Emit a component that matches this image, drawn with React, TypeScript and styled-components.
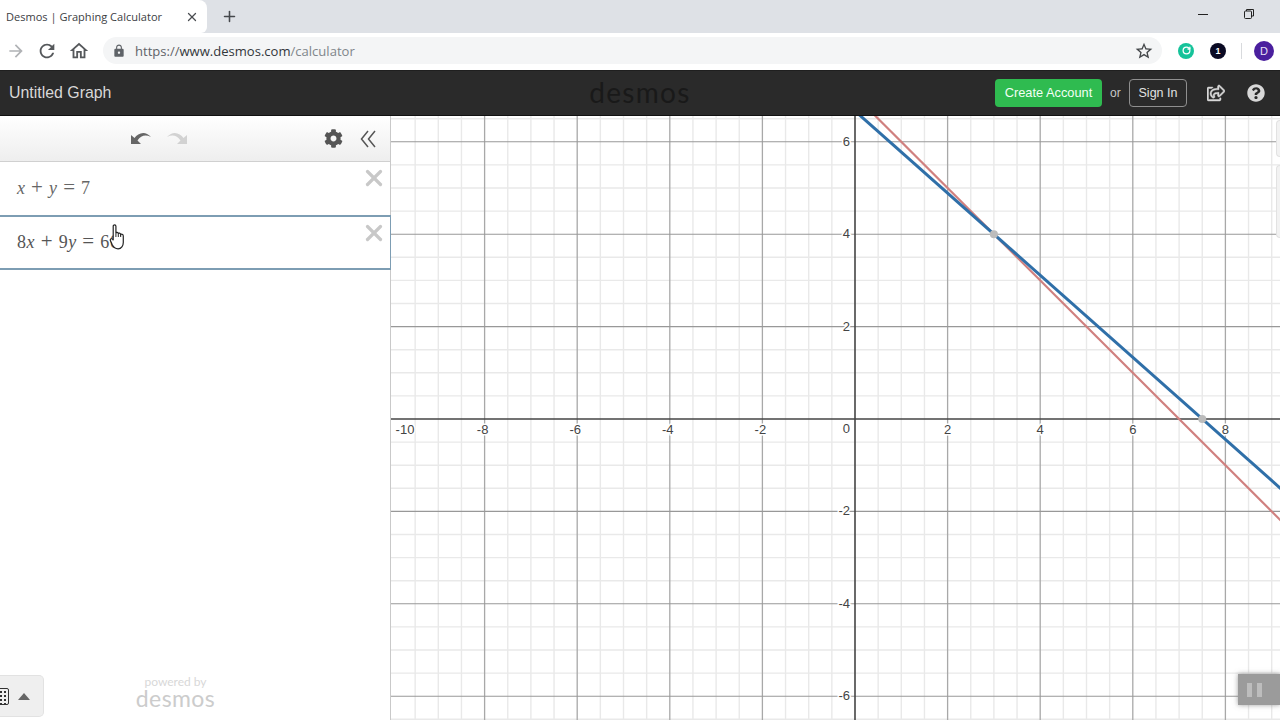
import { createGlobalStyle, styled } from "styled-components";
import { FaCog, FaQuestionCircle, FaRegShareSquare } from "react-icons/fa";
import {
  MdArrowForward,
  MdLock,
  MdOutlineHome,
  MdRefresh,
  MdStarBorder,
} from "react-icons/md";
import { LuPlus, LuRotateCw, LuX } from "react-icons/lu";

const UNIT_X = 46.3;
const UNIT_Y = 46.2;
const ORIGIN_X = 464;
const ORIGIN_Y = 303;
const WIDTH = 889;
const HEIGHT = 604;

const sx = (x: number) => ORIGIN_X + x * UNIT_X;
const sy = (y: number) => ORIGIN_Y - y * UNIT_Y;

const range = (from: number, to: number, step: number) => {
  const out: number[] = [];
  for (let v = from; v <= to; v += step) out.push(v);
  return out;
};

function Graph() {
  const minorX = range(-10, 10, 0.5).filter((v) => v % 2 !== 0);
  const minorY = range(-7, 7, 0.5).filter((v) => v % 2 !== 0);
  const majorX = range(-8, 10, 2).filter((v) => v !== 0);
  const majorY = range(-6, 6, 2).filter((v) => v !== 0);
  const labelsX = range(-10, 8, 2).filter((v) => v !== 0);

  return (
    <GraphSvg viewBox={`0 0 ${WIDTH} ${HEIGHT}`}>
      {minorX.map((v) => (
        <line key={v} x1={sx(v)} x2={sx(v)} y1={0} y2={HEIGHT} stroke="#e9e9e9" strokeWidth={1.4} />
      ))}
      {minorY.map((v) => (
        <line key={v} x1={0} x2={WIDTH} y1={sy(v)} y2={sy(v)} stroke="#e9e9e9" strokeWidth={1.4} />
      ))}
      {majorX.map((v) => (
        <line key={v} x1={sx(v)} x2={sx(v)} y1={0} y2={HEIGHT} stroke="#a8a8a8" strokeWidth={1.3} />
      ))}
      {majorY.map((v) => (
        <line key={v} x1={0} x2={WIDTH} y1={sy(v)} y2={sy(v)} stroke="#989898" strokeWidth={1.1} />
      ))}
      <line x1={0} x2={WIDTH} y1={ORIGIN_Y} y2={ORIGIN_Y} stroke="#444" strokeWidth={1.6} />
      <line x1={ORIGIN_X} x2={ORIGIN_X} y1={0} y2={HEIGHT} stroke="#444" strokeWidth={1.6} />

      <line x1={sx(0)} y1={sy(7)} x2={sx(10)} y2={sy(-3)} stroke="#d0807f" strokeWidth={2.2} />
      <line x1={sx(-1)} y1={sy(68 / 9)} x2={sx(10)} y2={sy(-20 / 9)} stroke="#2f6fa8" strokeWidth={3} />
      <circle cx={sx(3)} cy={sy(4)} r={4} fill="#bcbcbc" />
      <circle cx={sx(7.5)} cy={sy(0)} r={4} fill="#bcbcbc" />

      {labelsX.map((v) => (
        <TickLabel key={v} x={Math.max(sx(v) - (v < 0 ? 2 : 0), 14)} y={ORIGIN_Y + 15} textAnchor="middle">
          {v}
        </TickLabel>
      ))}
      {majorY.map((v) => (
        <TickLabel key={v} x={ORIGIN_X - 5} y={sy(v) + 4} textAnchor="end">
          {v}
        </TickLabel>
      ))}
      <TickLabel x={ORIGIN_X - 5} y={ORIGIN_Y + 14} textAnchor="end">
        0
      </TickLabel>
    </GraphSvg>
  );
}

function UndoArrow({ color }: { color: string }) {
  return (
    <svg width="22" height="16" viewBox="0 0 22 16">
      <path d="M1 14V5l3.5 3C8 3 15 0 21 7 16 4.5 11 5 7.5 10.5L11 14Z" fill={color} />
    </svg>
  );
}

function RemoveCross() {
  return <LuX size={26} strokeWidth={3} />;
}

export default function App() {
  return (
    <>
      <GlobalStyle />
      <Page>
        <TabStrip>
          <Tab>
            <TabTitle>Desmos | Graphing Calculator</TabTitle>
            <LuX size={14} strokeWidth={2.2} color="#4a4d51" />
          </Tab>
          <NewTab>
            <LuPlus size={17} strokeWidth={2.2} />
          </NewTab>
          <WindowControls>
            <svg width="12" height="12" viewBox="0 0 12 12">
              <path d="M1 6.5h10" stroke="#222" strokeWidth="1" />
            </svg>
            <svg width="12" height="12" viewBox="0 0 12 12" fill="none" stroke="#222">
              <rect x="1.5" y="3" width="7" height="7.5" rx="1" />
              <path d="M3.5 3V1.5h7V8H8.5" />
            </svg>
          </WindowControls>
        </TabStrip>

        <Toolbar>
          <NavIcons>
            <MdArrowForward size={20} color="#b0b2b5" />
            <MdRefresh size={22} color="#55585b" />
            <MdOutlineHome size={22} color="#55585b" />
          </NavIcons>
          <Omnibox>
            <MdLock size={14} color="#5f6368" />
            <Url>
              <UrlPart $tone="#5f6368">https://</UrlPart>
              <UrlPart $tone="#33373b">www.desmos.com</UrlPart>
              <UrlPart $tone="#80868b">/calculator</UrlPart>
            </Url>
            <StarSlot>
              <MdStarBorder size={20} color="#44474a" />
            </StarSlot>
          </Omnibox>
          <Extensions>
            <GrammarlyBadge>
              <LuRotateCw size={9} strokeWidth={3.4} color="#fff" />
            </GrammarlyBadge>
            <PasswordBadge>1</PasswordBadge>
            <ToolbarRule />
            <Avatar>D</Avatar>
          </Extensions>
        </Toolbar>

        <Header>
          <GraphTitle>Untitled Graph</GraphTitle>
          <HeaderLogo>desmos</HeaderLogo>
          <HeaderActions>
            <CreateButton>Create Account</CreateButton>
            <OrLabel>or</OrLabel>
            <SignInButton>Sign In</SignInButton>
            <ShareIcon>
              <FaRegShareSquare size={18} />
            </ShareIcon>
            <HelpIcon>
              <FaQuestionCircle size={18} />
            </HelpIcon>
          </HeaderActions>
        </Header>

        <Main>
          <Sidebar>
            <ListToolbar>
              <HistoryButtons>
                <UndoArrow color="#666" />
                <Mirrored>
                  <UndoArrow color="#d2d2d2" />
                </Mirrored>
              </HistoryButtons>
              <ListTools>
                <FaCog size={19} color="#555" />
                <svg width="16" height="18" viewBox="0 0 16 18" fill="none" stroke="#555" strokeWidth="1.5">
                  <path d="M8 1 1.5 9 8 17M15 1 8.5 9 15 17" />
                </svg>
              </ListTools>
            </ListToolbar>

            <Expression>
              <MathText $tone="#666">
                <i>x</i>
                <MathOp>+</MathOp>
                <i>y</i>
                <MathOp>=</MathOp>7
              </MathText>
              <RemoveIcon>
                <RemoveCross />
              </RemoveIcon>
            </Expression>
            <Expression $focused>
              <MathText $tone="#555">
                8<i>x</i>
                <MathOp>+</MathOp>9<i>y</i>
                <MathOp>=</MathOp>60
              </MathText>
              <RemoveIcon>
                <RemoveCross />
              </RemoveIcon>
              <HandCursor width="16" height="26" viewBox="0 0 14 24">
                <path
                  d="M3.5 12V2C3.5.5 6 .5 6 2v6.5C6.3 7.5 8 7.5 8.2 9c.3-1 2-.8 2.2.8.4-.8 2.4-.5 2.4 1.2v6c0 3-1.8 6-4.8 6-3 0-4.5-2-5.5-4L.8 15c-.3-1.5 1.7-2.2 2.7 0Z"
                  fill="#fff"
                  stroke="#222"
                  strokeWidth="1.1"
                />
                <path d="M6 8.5V12M8.2 9v3M10.4 9.8V12" fill="none" stroke="#222" strokeWidth=".9" />
              </HandCursor>
            </Expression>

            <SidebarFooter>
              <KeypadToggle>
                <KeypadGlyph />
                <KeypadCaret />
              </KeypadToggle>
              <PoweredBy>
                <PoweredLabel>powered by</PoweredLabel>
                <PoweredLogo>desmos</PoweredLogo>
              </PoweredBy>
            </SidebarFooter>
          </Sidebar>

          <GraphPane>
            <Graph />
            <EdgeControls>
              <EdgeTab $height={37} />
              <EdgeTab $height={73} />
            </EdgeControls>
            <PauseOverlay>
              <PauseBar />
              <PauseBar />
            </PauseOverlay>
          </GraphPane>
        </Main>
      </Page>
    </>
  );
}

const GlobalStyle = createGlobalStyle`
  html, body {
    margin: 0;
    padding: 0;
    background: #fff;
    overflow: hidden;
  }
`;

const Page = styled.div`
  width: 1280px;
  height: 720px;
  display: flex;
  flex-direction: column;
  overflow: hidden;
  font-family: "Liberation Sans", Arial, sans-serif;
`;

const TabStrip = styled.div`
  height: 33px;
  flex: none;
  display: flex;
  align-items: center;
  background: #dee1e6;
`;

const Tab = styled.div`
  width: 207px;
  height: 33px;
  box-sizing: border-box;
  padding: 0 8px 0 6px;
  display: flex;
  align-items: center;
  justify-content: space-between;
  background: #fff;
  border-top-right-radius: 8px;
  border-bottom-right-radius: 6px;
`;

const TabTitle = styled.span`
  font-family: "Open Sans", sans-serif;
  font-size: 11.05px;
  color: #3c4043;
`;

const NewTab = styled.div`
  margin-left: 14px;
  display: flex;
  color: #45484c;
`;

const WindowControls = styled.div`
  margin-left: auto;
  width: 58px;
  margin-right: 25px;
  padding-bottom: 5px;
  display: flex;
  justify-content: space-between;
`;

const Toolbar = styled.div`
  height: 37px;
  flex: none;
  box-sizing: border-box;
  padding: 3px 0 5px 6px;
  display: flex;
  align-items: center;
  background: #fff;
`;

const NavIcons = styled.div`
  width: 97px;
  flex: none;
  display: flex;
  align-items: center;
  gap: 10px;
`;

const Omnibox = styled.div`
  width: 1059px;
  height: 27px;
  flex: none;
  box-sizing: border-box;
  padding: 0 8px 0 9px;
  display: flex;
  align-items: center;
  gap: 9px;
  background: #f4f5f6;
  border-radius: 14px;
`;

const Url = styled.span`
  font-family: "Open Sans", sans-serif;
  font-size: 13.05px;
`;

const UrlPart = styled.span<{ $tone: string }>`
  color: ${(p) => p.$tone};
`;

const StarSlot = styled.span`
  margin-left: auto;
  display: flex;
`;

const Extensions = styled.div`
  flex: 1;
  padding-left: 16px;
  display: flex;
  align-items: center;
`;

const GrammarlyBadge = styled.span`
  width: 16px;
  height: 16px;
  display: flex;
  align-items: center;
  justify-content: center;
  background: #15c39a;
  border-radius: 50%;
`;

const PasswordBadge = styled.span`
  width: 16px;
  height: 16px;
  margin-left: 16px;
  display: flex;
  align-items: center;
  justify-content: center;
  background: #0a0a23;
  border-radius: 50%;
  color: #fff;
  font-size: 9px;
  font-weight: 700;
`;

const ToolbarRule = styled.span`
  width: 1px;
  height: 16px;
  margin: 0 12px 0 15px;
  background: #d8dadd;
`;

const Avatar = styled.span`
  width: 20px;
  height: 20px;
  display: flex;
  align-items: center;
  justify-content: center;
  background: #4a1f9e;
  border-radius: 50%;
  color: #e8e0f5;
  font-size: 11px;
`;

const Header = styled.header`
  height: 46px;
  flex: none;
  box-sizing: border-box;
  padding: 0 15px;
  display: grid;
  grid-template-columns: 1fr auto 1fr;
  align-items: center;
  background: #2a2a2a;
  border-top: 1px solid #1f1f1f;
  border-bottom: 1px solid #111;
`;

const GraphTitle = styled.div`
  margin-left: -6px;
  font-size: 15.9px;
  color: #d8d8d8;
`;

const HeaderLogo = styled.div`
  margin-top: -3px;
  font-family: "Lato", sans-serif;
  font-size: 28px;
  letter-spacing: 1.3px;
  color: #191919;
`;

const HeaderActions = styled.div`
  display: flex;
  align-items: center;
  justify-content: flex-end;
`;

const CreateButton = styled.div`
  height: 28px;
  width: 107px;
  box-sizing: border-box;
  padding-bottom: 2px;
  display: flex;
  align-items: center;
  justify-content: center;
  background: #2fbb50;
  border-radius: 4px;
  color: #f2fff5;
  font-size: 12.8px;
`;

const OrLabel = styled.span`
  width: 11px;
  margin: 0 8px;
  color: #c8c8c8;
  font-size: 12px;
`;

const SignInButton = styled.div`
  height: 28px;
  width: 58px;
  box-sizing: border-box;
  display: flex;
  align-items: center;
  justify-content: center;
  border: 1px solid #8f8f8f;
  border-radius: 4px;
  color: #e2e2e2;
  font-size: 12.5px;
`;

const ShareIcon = styled.span`
  margin-left: 20px;
  display: flex;
  color: #d8d8d8;

  svg {
    stroke: currentColor;
    stroke-width: 14px;
  }
`;

const HelpIcon = styled.span`
  margin-left: 22px;
  display: flex;
  color: #d8d8d8;
`;

const Main = styled.main`
  flex: 1;
  min-height: 0;
  display: flex;
`;

const Sidebar = styled.aside`
  width: 391px;
  flex: none;
  box-sizing: border-box;
  display: flex;
  flex-direction: column;
  background: #fff;
  border-right: 1px solid #c9c9c9;
`;

const ListToolbar = styled.div`
  height: 46px;
  flex: none;
  box-sizing: border-box;
  padding: 0 14px 0 130px;
  display: flex;
  align-items: center;
  justify-content: space-between;
  background: linear-gradient(#ffffff, #eeeeee);
  border-bottom: 1px solid #d0d0d0;
`;

const HistoryButtons = styled.div`
  margin-top: -2px;
  display: flex;
  gap: 14px;
`;

const Mirrored = styled.span`
  display: flex;
  transform: scaleX(-1);
`;

const ListTools = styled.div`
  display: flex;
  align-items: center;
  gap: 17px;
`;

const Expression = styled.div<{ $focused?: boolean }>`
  position: relative;
  height: ${(p) => (p.$focused ? "55px" : "53px")};
  flex: none;
  box-sizing: border-box;
  padding: 3px 3px 3px 17px;
  display: flex;
  justify-content: space-between;
  background: #fff;
  border: 0 solid #7d9db3;
  border-width: ${(p) => (p.$focused ? "2px 0 2px 0" : "0")};
  box-shadow: ${(p) => (p.$focused ? "1px 0 0 #7d9db3" : "none")};
`;

const MathText = styled.div<{ $tone: string }>`
  align-self: center;
  font-family: "Liberation Serif", "Times New Roman", serif;
  font-size: 18px;
  letter-spacing: 0.6px;
  white-space: pre;
  color: ${(p) => p.$tone};
`;

const MathOp = styled.span`
  margin: 0 5.5px;
  font-size: 21px;
  line-height: 18px;
`;

const RemoveIcon = styled.span`
  display: flex;
  height: 26px;
  color: #c8c8c8;
`;

const HandCursor = styled.svg`
  position: absolute;
  left: 109px;
  top: 7px;
`;

const SidebarFooter = styled.div`
  margin-top: auto;
  padding-bottom: 3px;
  display: flex;
  align-items: flex-end;
`;

const KeypadToggle = styled.div`
  width: 44px;
  height: 42px;
  box-sizing: border-box;
  padding-right: 13px;
  display: flex;
  align-items: center;
  justify-content: space-between;
  background: #efefef;
  border: 1px solid #e2e2e2;
  border-left: 0;
  border-radius: 0 5px 5px 0;
`;

const KeypadGlyph = styled.span`
  width: 16px;
  height: 17px;
  margin-left: -7px;
  box-sizing: border-box;
  background: radial-gradient(circle, #333 1px, transparent 1.2px) 1px 1px / 4px 4px;
  border: 1.5px solid #333;
  border-radius: 2px;
`;

const KeypadCaret = styled.span`
  width: 0;
  height: 0;
  border-left: 6px solid transparent;
  border-right: 6px solid transparent;
  border-bottom: 7px solid #666;
`;

const PoweredBy = styled.div`
  margin-left: 93px;
  padding-bottom: 9px;
  width: 77px;
  display: flex;
  flex-direction: column;
  align-items: center;
`;

const PoweredLabel = styled.span`
  font-family: "Lato", sans-serif;
  font-size: 12px;
  line-height: 12px;
  color: #d8d8d8;
`;

const PoweredLogo = styled.span`
  font-family: "Lato", sans-serif;
  font-size: 23px;
  line-height: 20px;
  letter-spacing: 0.4px;
  color: #cccccc;
`;

const GraphPane = styled.section`
  position: relative;
  flex: 1;
  min-width: 0;
  overflow: hidden;
  background: #fff;
`;

const GraphSvg = styled.svg`
  display: block;
  width: 100%;
  height: 100%;
`;

const TickLabel = styled.text`
  font-family: "Liberation Sans", Arial, sans-serif;
  font-size: 13px;
  fill: #444;
  paint-order: stroke;
  stroke: #fff;
  stroke-width: 3px;
`;

const EdgeControls = styled.div`
  position: absolute;
  top: 4px;
  right: 0;
  display: flex;
  flex-direction: column;
  gap: 8px;
`;

const EdgeTab = styled.div<{ $height: number }>`
  width: 4px;
  height: ${(p) => p.$height}px;
  box-sizing: border-box;
  background: #f2f2f2;
  border: 1px solid #e2e2e2;
  border-right: 0;
  border-radius: 4px 0 0 4px;
`;

const PauseOverlay = styled.div`
  position: absolute;
  right: 0;
  bottom: 15px;
  width: 42px;
  height: 31px;
  box-sizing: border-box;
  padding-left: 9px;
  display: flex;
  align-items: center;
  gap: 5px;
  background: #9b9b9b;
  box-shadow: 0 0 5px rgba(120, 120, 120, 0.7);
`;

const PauseBar = styled.span`
  width: 5px;
  height: 14px;
  background: #bdbdbd;
`;
